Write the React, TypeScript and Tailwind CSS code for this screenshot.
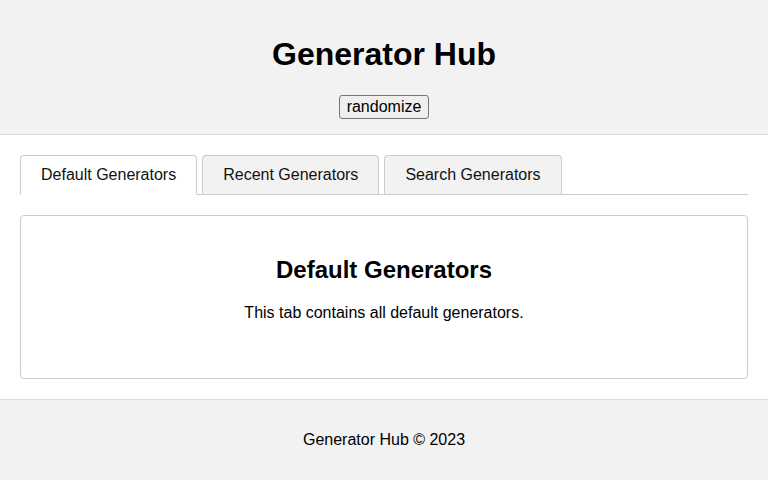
import React, { useState } from 'react';

const tabs = [
  { id: 'default', label: 'Default Generators', title: 'Default Generators', text: 'This tab contains all default generators.' },
  { id: 'recent', label: 'Recent Generators', title: 'Recent Generators', text: 'This tab contains your recently used generators.' },
  { id: 'search', label: 'Search Generators', title: 'Search Generators', text: 'Search through all available generators.' },
];

const App = () => {
  const [active, setActive] = useState('default');
  const current = tabs.find((t) => t.id === active)!;

  return (
    <div className="min-h-screen bg-white text-black" style={{ fontFamily: '"Liberation Sans", Arial, sans-serif' }}>
      <header className="bg-[#f2f2f2] border-b border-[#dddddd] pt-[36px] pb-[15px] text-center">
        <h1 className="text-[32px] font-bold leading-[37px]">Generator Hub</h1>
        <button className="mt-[22px] px-[7px] h-[24px] text-[16px] leading-[18px] bg-[#efefef] border border-[#767676] rounded-[3px] text-black hover:bg-[#e5e5e5]">
          randomize
        </button>
      </header>

      <main className="p-[20px]">
        <div className="flex gap-[5px] border-b border-[#cccccc]">
          {tabs.map((t) => (
            <button
              key={t.id}
              onClick={() => setActive(t.id)}
              className={
                t.id === active
                  ? 'px-[20px] py-[10px] text-[16px] leading-[18px] border border-[#cccccc] border-b-white -mb-px rounded-t-[4px] bg-white text-[#111111]'
                  : 'px-[20px] py-[10px] text-[16px] leading-[18px] border border-[#cccccc] border-b-0 rounded-t-[4px] bg-[#f2f2f2] text-[#111111] hover:bg-[#e8e8e8]'
              }
            >
              {t.label}
            </button>
          ))}
        </div>

        <section className="mt-[20px] border border-[#cccccc] rounded-[4px] pt-[40px] pb-[56px] px-[20px] text-center">
          <h2 className="text-[24px] font-bold leading-[28px]">{current.title}</h2>
          <p className="mt-[20px] text-[16px] leading-[18px]">{current.text}</p>
        </section>
      </main>

      <footer className="bg-[#f2f2f2] border-t border-[#dddddd] py-[31px] text-center">
        <p className="text-[16px] leading-[18px]">Generator Hub © 2023</p>
      </footer>
    </div>
  );
};

export default App;
